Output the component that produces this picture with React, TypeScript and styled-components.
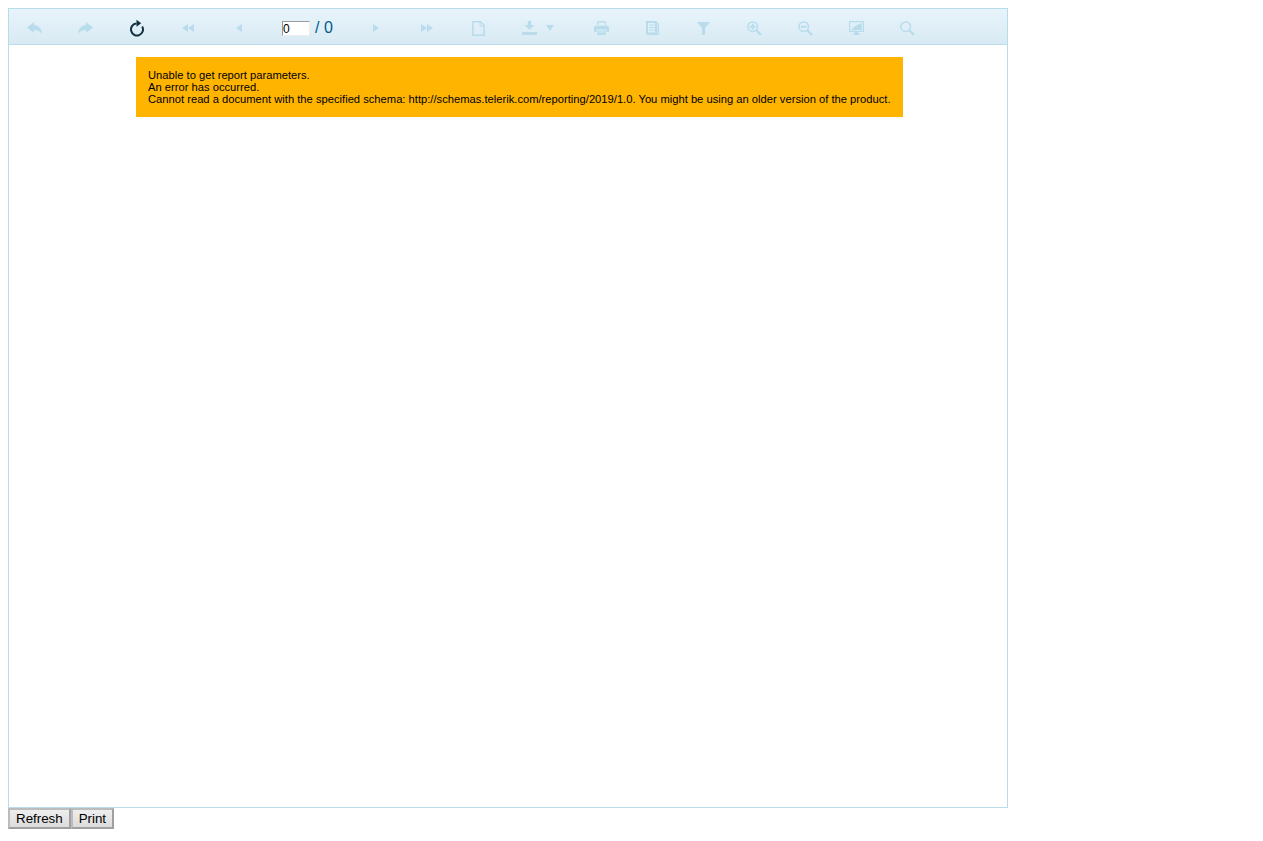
import React from "react";
import styled, { createGlobalStyle } from "styled-components";

const GlobalStyle = createGlobalStyle`
  html, body {
    margin: 0;
    padding: 0;
    background: #fff;
  }
  body {
    padding: 8px;
    font-family: "Liberation Sans", Arial, sans-serif;
  }
`;

const ICON = "#b8dcec";

const Svg = ({ children, w = 18, h = 18 }: { children: React.ReactNode; w?: number; h?: number }) => (
  <svg width={w} height={h} viewBox={`0 0 ${w} ${h}`} fill={ICON} fillRule="evenodd">
    {children}
  </svg>
);

const BackIcon = () => (
  <Svg w={15} h={12}>
    <path d="M7 0 L0 5.5 L7 11 V8 C10.5 8 13 9 15 12 C15 7 11.5 3.4 7 3 Z" />
  </Svg>
);
const ForwardIcon = () => (
  <Svg w={15} h={12}>
    <path d="M8 0 L15 5.5 L8 11 V8 C4.5 8 2 9 0 12 C0 7 3.5 3.4 8 3 Z" />
  </Svg>
);
const RefreshIcon = () => (
  <svg width="16" height="18" viewBox="0 0 16 18" fill="none">
    <path d="M7.5 4.5 A6 6 0 1 0 13.2 7.5" stroke="#12303f" strokeWidth="2" />
    <path d="M7.5 .8 L12.2 4.2 L7.5 7.8 Z" fill="#12303f" />
  </svg>
);
const FirstIcon = () => (
  <Svg w={12} h={8}>
    <path d="M6 0 V8 L0 4 Z M12 0 V8 L6 4 Z" />
  </Svg>
);
const PrevIcon = () => (
  <Svg w={6} h={8}>
    <path d="M6 0 V8 L0 4 Z" />
  </Svg>
);
const NextIcon = () => (
  <Svg w={6} h={8}>
    <path d="M0 0 V8 L6 4 Z" />
  </Svg>
);
const LastIcon = () => (
  <Svg w={12} h={8}>
    <path d="M0 0 V8 L6 4 Z M6 0 V8 L12 4 Z" />
  </Svg>
);
const PageIcon = () => (
  <svg width="13" height="15" viewBox="0 0 13 15" fill="none" stroke={ICON} strokeWidth="1.5">
    <path d="M.8 .8 H8.5 L12.2 4.5 V14.2 H.8 Z" />
    <path d="M8 .8 V5 H12.2" strokeWidth="1" />
  </svg>
);
const DownloadIcon = () => (
  <Svg w={15} h={14}>
    <path d="M5.8 0 H9.2 V4 H12.5 L7.5 8.8 L2.5 4 H5.8 Z" />
    <rect y="11" width="15" height="3" />
  </Svg>
);
const CaretIcon = () => (
  <Svg w={8} h={6}>
    <path d="M0 0 H8 L4 6 Z" />
  </Svg>
);
const PrintIcon = () => (
  <Svg w={15} h={14}>
    <path d="M3 1.5 Q3 0 4.5 0 H10.5 Q12 0 12 1.5 V4 H10.7 V1.4 H4.3 V4 H3 Z" />
    <path d="M1.5 4.8 H13.5 Q15 4.8 15 6.3 V11 H12.4 V8.6 H2.6 V11 H0 V6.3 Q0 4.8 1.5 4.8 Z" />
    <path d="M3.4 9.4 H11.6 V14 H3.4 Z M4.8 10.6 V11.4 H10.2 V10.6 Z" />
  </Svg>
);
const BookIcon = () => (
  <svg width="13" height="14" viewBox="0 0 13 14" fill="none" stroke={ICON}>
    <path d="M1 1 H10 V12.5 H1 Z" strokeWidth="2" />
    <path d="M12.3 2 V13.4 H2" strokeWidth="1.4" />
    <path d="M3 4 H8.5 M3 6.5 H8.5 M3 9 H8.5" strokeWidth="1.1" />
  </svg>
);
const FilterIcon = () => (
  <Svg w={13} h={13}>
    <path d="M0 0 H13 L8 6 V13 H5 V6 Z" />
  </Svg>
);
const Lens = ({ mark }: { mark?: "plus" | "minus" }) => (
  <svg width="15" height="15" viewBox="0 0 15 15" fill="none" stroke={ICON}>
    <circle cx="5.7" cy="5.7" r="4.8" strokeWidth="1.5" />
    <path d="M9 9 L14 14" strokeWidth="2.4" />
    {mark && <path d="M2.8 5.7 H8.6" strokeWidth="1.9" />}
    {mark === "plus" && <path d="M5.7 2.8 V8.6" strokeWidth="1.9" />}
  </svg>
);
const ScreenIcon = () => (
  <svg width="15" height="14" viewBox="0 0 15 14" fill={ICON}>
    <path d="M.6 .6 H14.4 V10.4 H.6 Z" fill="none" stroke={ICON} strokeWidth="1.2" />
    <path d="M2.2 9 C5 5.5 9 2.8 12.8 2.2 V9 Z" />
    <path d="M4.5 12 H10.5 V14 H4.5 Z M6 10.5 H9 V12 H6 Z" />
  </svg>
);

const Viewer = styled.div`
  box-sizing: border-box;
  width: 1000px;
  height: 800px;
  border: 1px solid #b9dbea;
`;

const Toolbar = styled.div`
  box-sizing: border-box;
  display: flex;
  align-items: center;
  height: 36px;
  padding-top: 3px;
  border-bottom: 1px solid #b9dbea;
  background: linear-gradient(#e8f4fb, #d8eaf3);
`;

const ToolItem = styled.span<{ $width?: number; $gap?: number; $shift?: number }>`
  box-sizing: border-box;
  flex: none;
  display: flex;
  align-items: center;
  justify-content: center;
  gap: ${(p) => p.$gap ?? 0}px;
  width: ${(p) => p.$width ?? 51.1}px;
  height: 100%;
  padding-right: ${(p) => p.$shift ?? 0}px;
`;

const Pager = styled.span`
  box-sizing: border-box;
  flex: none;
  display: flex;
  align-items: center;
  justify-content: center;
  width: 86px;
  height: 100%;
  color: #005b8c;
  font-size: 16px;
`;

const PageInput = styled.input`
  box-sizing: border-box;
  width: 28px;
  height: 15px;
  margin: 1px 5px 0 0;
  padding: 0;
  border: 1px solid;
  border-color: #9a9a9a #eee #eee #9a9a9a;
  background: #fff;
  color: #000;
  font: 12px "Liberation Sans", Arial, sans-serif;
`;

const Content = styled.div`
  padding: 12px 0 0 127px;
`;

const ErrorBox = styled.div`
  display: inline-block;
  padding: 12px;
  background: #ffb400;
  color: #000;
  font-size: 11.2px;
  line-height: 12px;
  white-space: nowrap;
`;

const Actions = styled.div`
  display: flex;
`;

const ActionButton = styled.button`
  box-sizing: border-box;
  height: 21px;
  margin: 0;
  padding: 1px 6px;
  border: 2px solid;
  border-color: #bcbcbc #a0a0a0 #a0a0a0 #bcbcbc;
  background: linear-gradient(#eeeeee, #dcdcdc);
  color: #000;
  font: 13.3333px "Liberation Sans", Arial, sans-serif;
`;

export default function App() {
  return (
    <>
      <GlobalStyle />
      <Viewer>
        <Toolbar>
          <ToolItem><BackIcon /></ToolItem>
          <ToolItem><ForwardIcon /></ToolItem>
          <ToolItem><RefreshIcon /></ToolItem>
          <ToolItem><FirstIcon /></ToolItem>
          <ToolItem><PrevIcon /></ToolItem>
          <Pager>
            <PageInput defaultValue="0" />/ 0
          </Pager>
          <ToolItem><NextIcon /></ToolItem>
          <ToolItem><LastIcon /></ToolItem>
          <ToolItem><PageIcon /></ToolItem>
          <ToolItem $width={72} $gap={9} $shift={4}><DownloadIcon /><CaretIcon /></ToolItem>
          <ToolItem><PrintIcon /></ToolItem>
          <ToolItem><BookIcon /></ToolItem>
          <ToolItem><FilterIcon /></ToolItem>
          <ToolItem><Lens mark="plus" /></ToolItem>
          <ToolItem><Lens mark="minus" /></ToolItem>
          <ToolItem><ScreenIcon /></ToolItem>
          <ToolItem><Lens /></ToolItem>
        </Toolbar>
        <Content>
          <ErrorBox>
            Unable to get report parameters.
            <br />
            An error has occurred.
            <br />
            Cannot read a document with the specified schema: http://schemas.telerik.com/reporting/2019/1.0. You might be using an older version of the product.
          </ErrorBox>
        </Content>
      </Viewer>
      <Actions>
        <ActionButton>Refresh</ActionButton>
        <ActionButton>Print</ActionButton>
      </Actions>
    </>
  );
}
